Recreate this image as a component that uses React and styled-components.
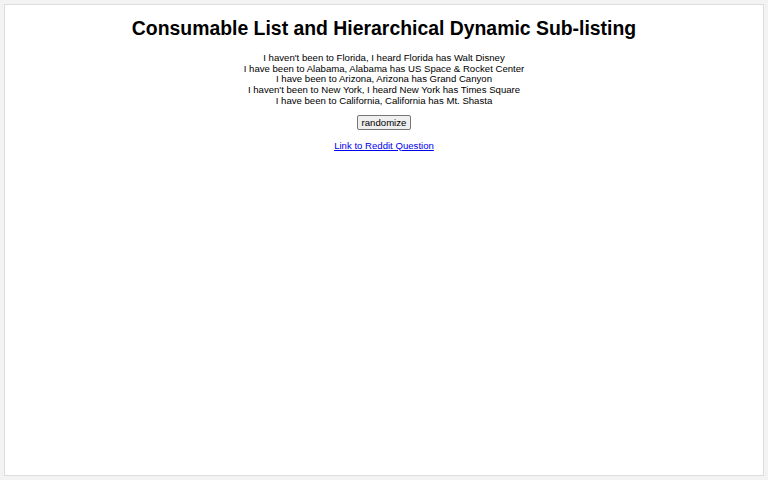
import React, { useState } from 'react';
import styled, { createGlobalStyle } from 'styled-components';

const GlobalStyle = createGlobalStyle`
  html, body {
    margin: 0;
    padding: 0;
    background: #f3f3f3;
  }
  body {
    font-family: "Liberation Sans", Arial, sans-serif;
  }
`;

const Page = styled.div`
  height: 480px;
  padding: 4px;
  box-sizing: border-box;
`;

const Panel = styled.div`
  height: 100%;
  box-sizing: border-box;
  background: #fff;
  border: 1px solid #dcdcdc;
  display: flex;
  flex-direction: column;
  align-items: center;
  text-align: center;
`;

const Title = styled.h1`
  margin: 12px 0 0 0;
  font-size: 19.4px;
  line-height: 23px;
  font-weight: bold;
  color: #000;
`;

const List = styled.div`
  margin-top: 13px;
  font-size: 9.6px;
  line-height: 10.7px;
  color: #000;
`;

const Line = styled.div``;

const Button = styled.button`
  margin-top: 8px;
  font-family: "Liberation Sans", Arial, sans-serif;
  font-size: 9.6px;
  height: 15px;
  padding: 0 4px;
  line-height: 13px;
  background: #efefef;
  border: 1px solid #767676;
  border-radius: 2px;
  color: #000;
`;

const Link = styled.a`
  margin-top: 10px;
  font-size: 9.6px;
  line-height: 11px;
  color: #0000ee;
  text-decoration: underline;
`;

const states = [
  { name: 'Florida', visited: false, sight: 'Walt Disney' },
  { name: 'Alabama', visited: true, sight: 'US Space & Rocket Center' },
  { name: 'Arizona', visited: true, sight: 'Grand Canyon' },
  { name: 'New York', visited: false, sight: 'Times Square' },
  { name: 'California', visited: true, sight: 'Mt. Shasta' },
];

function describe(s) {
  return s.visited
    ? `I have been to ${s.name}, ${s.name} has ${s.sight}`
    : `I haven't been to ${s.name}, I heard ${s.name} has ${s.sight}`;
}

export default function App() {
  const [list, setList] = useState(states);

  const randomize = () => {
    setList(list.map((s) => ({ ...s, visited: Math.random() > 0.5 })));
  };

  return (
    <Page>
      <GlobalStyle />
      <Panel>
        <Title>Consumable List and Hierarchical Dynamic Sub-listing</Title>
        <List>
          {list.map((s) => (
            <Line key={s.name}>{describe(s)}</Line>
          ))}
        </List>
        <Button onClick={randomize}>randomize</Button>
        <Link href="#">Link to Reddit Question</Link>
      </Panel>
    </Page>
  );
}
